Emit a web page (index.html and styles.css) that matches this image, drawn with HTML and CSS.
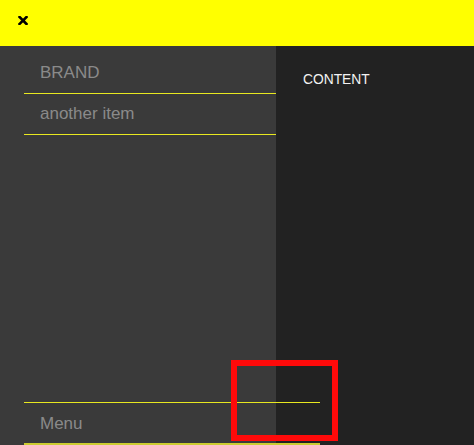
FILE: index.html
```html
<!DOCTYPE html>
<html lang="en">
<head>
<meta charset="utf-8">
<title>Sidebar</title>
<link rel="stylesheet" href="styles.css">
</head>
<body>
<header class="topbar">
  <span class="close" aria-label="Close">
    <svg width="10" height="9" viewBox="0 0 10 9"><path d="M1.5 1 L8.5 8 M8.5 1 L1.5 8" stroke="#000" stroke-width="2.6" stroke-linecap="square" fill="none"/></svg>
  </span>
</header>
<div class="layout">
  <nav class="sidebar">
    <ul class="nav-list">
      <li class="nav-item">BRAND</li>
      <li class="nav-item">another item</li>
    </ul>
    <div class="nav-bottom">Menu</div>
  </nav>
  <main class="content">CONTENT</main>
</div>
<div class="highlight"></div>
</body>
</html>
```
FILE: styles.css
```css
html, body {
  margin: 0;
  padding: 0;
}
body {
  width: 474px;
  height: 445px;
  overflow: hidden;
  background: #222222;
  font-family: "Liberation Sans", Arial, sans-serif;
  display: flex;
  flex-direction: column;
  position: relative;
}
.topbar {
  height: 46px;
  flex: 0 0 46px;
  background: #ffff00;
  box-sizing: border-box;
  padding: 16px 0 0 18px;
}
.close {
  display: block;
  width: 10px;
  height: 9px;
}
.close svg {
  display: block;
}
.layout {
  flex: 1;
  display: flex;
  min-height: 0;
}
.sidebar {
  width: 276px;
  flex: 0 0 276px;
  background: #3a3a3a;
  display: flex;
  flex-direction: column;
  position: relative;
  z-index: 1;
}
.nav-list {
  list-style: none;
  margin: 7px 0 0 24px;
  padding: 0;
}
.nav-item,
.nav-bottom {
  font-size: 17px;
  line-height: 20px;
  color: #8a8a8a;
  padding: 10px 0 10px 16px;
}
.nav-item {
  border-bottom: 1px solid #e8e820;
}
.nav-bottom {
  margin-top: auto;
  margin-left: 24px;
  width: 296px;
  box-sizing: border-box;
  padding-top: 11px;
  padding-bottom: 9px;
  border-top: 1px solid #e8e820;
  border-bottom: 2px solid #cccc30;
}
.content {
  flex: 1;
  background: #222222;
  color: #f2f2f2;
  font-size: 13.8px;
  padding: 26px 27px;
}
.highlight {
  position: absolute;
  left: 231px;
  top: 360px;
  width: 107px;
  height: 81px;
  box-sizing: border-box;
  border: 6px solid #ff0a0a;
  z-index: 2;
}
```
